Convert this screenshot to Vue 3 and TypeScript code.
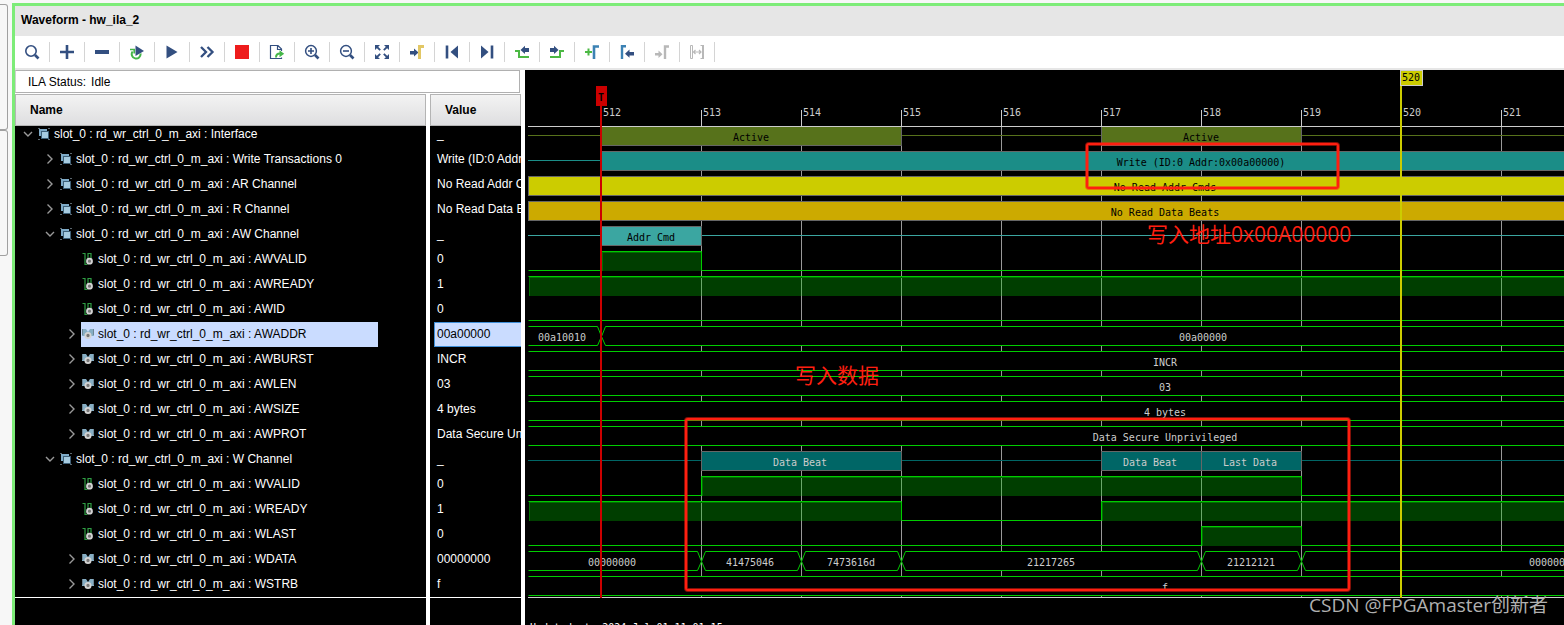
<script setup lang="ts">
type Kind = 'group' | 'signal' | 'bus'

interface Row {
  name: string
  value: string
  level: number
  kind: Kind
  open?: boolean
  selected?: boolean
}

interface Bar {
  from: number
  to: number
  label?: string
  center?: number
}

interface Segment {
  from: number
  to: number
  label: string
  center: number
}

type Wave =
  | { type: 'event'; color: string; text: string; bars: Bar[] }
  | { type: 'bit'; high: [number, number][] }
  | { type: 'value'; segments: Segment[] }

const prefix = 'slot_0 : rd_wr_ctrl_0_m_axi : '

const rows: Row[] = [
  { name: 'Interface', value: '_', level: 0, kind: 'group', open: true },
  { name: 'Write Transactions 0', value: 'Write (ID:0 Addr:0x00a00000)', level: 1, kind: 'group', open: false },
  { name: 'AR Channel', value: 'No Read Addr Cmds', level: 1, kind: 'group', open: false },
  { name: 'R Channel', value: 'No Read Data Beats', level: 1, kind: 'group', open: false },
  { name: 'AW Channel', value: '_', level: 1, kind: 'group', open: true },
  { name: 'AWVALID', value: '0', level: 2, kind: 'signal' },
  { name: 'AWREADY', value: '1', level: 2, kind: 'signal' },
  { name: 'AWID', value: '0', level: 2, kind: 'signal' },
  { name: 'AWADDR', value: '00a00000', level: 2, kind: 'bus', open: false, selected: true },
  { name: 'AWBURST', value: 'INCR', level: 2, kind: 'bus', open: false },
  { name: 'AWLEN', value: '03', level: 2, kind: 'bus', open: false },
  { name: 'AWSIZE', value: '4 bytes', level: 2, kind: 'bus', open: false },
  { name: 'AWPROT', value: 'Data Secure Unprivileged', level: 2, kind: 'bus', open: false },
  { name: 'W Channel', value: '_', level: 1, kind: 'group', open: true },
  { name: 'WVALID', value: '0', level: 2, kind: 'signal' },
  { name: 'WREADY', value: '1', level: 2, kind: 'signal' },
  { name: 'WLAST', value: '0', level: 2, kind: 'signal' },
  { name: 'WDATA', value: '00000000', level: 2, kind: 'bus', open: false },
  { name: 'WSTRB', value: 'f', level: 2, kind: 'bus', open: false },
]

const tools = [
  'Search', 'Add', 'Remove', 'Run trigger', 'Run', 'Run immediate', 'Stop', 'Export', 'Zoom in', 'Zoom out',
  'Zoom fit', 'Go to cursor', 'Go to start', 'Go to end', 'Previous transition', 'Next transition',
  'Add marker', 'Previous marker', 'Next marker', 'Swap cursors',
]

const CYCLE = 100
const ORIGIN = 76
const LEFT = 3
const FAR = 4000
const PITCH = 25
const TOP = 56
const BOTTOM = 527
const START = 511
const END = 560

function tx(cycle: number): number {
  if (cycle <= START) return LEFT
  if (cycle >= END) return FAR
  return ORIGIN + (cycle - 512) * CYCLE
}

const ticks = Array.from({ length: 20 }, (_, i) => 512 + i)

const whole = (label: string): Wave => ({
  type: 'value',
  segments: [{ from: START, to: END, label, center: 640 }],
})

const waves: Wave[] = [
  { type: 'event', color: '#57721b', text: '#000', bars: [{ from: 512, to: 515, label: 'Active', center: 226 }, { from: 517, to: 519, label: 'Active', center: 676 }] },
  { type: 'event', color: '#1b8d87', text: '#000', bars: [{ from: 512, to: END, label: 'Write (ID:0 Addr:0x00a00000)', center: 676 }] },
  { type: 'event', color: '#cccc00', text: '#000', bars: [{ from: START, to: END, label: 'No Read Addr Cmds', center: 640 }] },
  { type: 'event', color: '#ccaa00', text: '#000', bars: [{ from: START, to: END, label: 'No Read Data Beats', center: 640 }] },
  { type: 'event', color: '#3ba6a1', text: '#000', bars: [{ from: 512, to: 513, label: 'Addr Cmd', center: 126 }] },
  { type: 'bit', high: [[512, 513]] },
  { type: 'bit', high: [[START, END]] },
  { type: 'bit', high: [] },
  { type: 'value', segments: [{ from: START, to: 512, label: '00a10010', center: 37 }, { from: 512, to: END, label: '00a00000', center: 678 }] },
  whole('INCR'),
  whole('03'),
  whole('4 bytes'),
  whole('Data Secure Unprivileged'),
  {
    type: 'event', color: '#006666', text: '#ccc', bars: [
      { from: 513, to: 515, label: 'Data Beat', center: 275 },
      { from: 517, to: 518, label: 'Data Beat', center: 625 },
      { from: 518, to: 519, label: 'Last Data', center: 725 },
    ],
  },
  { type: 'bit', high: [[513, 519]] },
  { type: 'bit', high: [[START, 515], [517, END]] },
  { type: 'bit', high: [[518, 519]] },
  {
    type: 'value', segments: [
      { from: START, to: 513, label: '00000000', center: 87 },
      { from: 513, to: 514, label: '41475046', center: 225 },
      { from: 514, to: 515, label: '7473616d', center: 326 },
      { from: 515, to: 518, label: '21217265', center: 526 },
      { from: 518, to: 519, label: '21212121', center: 726 },
      { from: 519, to: END, label: '00000000', center: 1028 },
    ],
  },
  whole('f'),
]

const rowTop = (i: number): number => TOP + i * PITCH

function bitPath(high: [number, number][]): string {
  let d = high.length && high[0][0] <= START ? `M${LEFT} 0` : `M${LEFT} 19`
  for (const [from, to] of high) {
    if (from > START) d += `H${tx(from)}V0`
    d += `H${tx(to)}`
    if (to < END) d += 'V19'
  }
  return d + `H${FAR}`
}

function segmentPath(s: Segment): string {
  const a = tx(s.from)
  const b = tx(s.to)
  const left = s.from > START ? `M${a} 10L${a + 4} 0` : `M${a} 0`
  const right = s.to < END ? `H${b - 4}L${b} 10L${b - 4} 19` : `H${b}V19`
  const back = s.from > START ? `H${a + 4}L${a} 10` : `H${a}`
  return left + right + back
}
</script>

<template>
  <div class="screen">
    <aside class="edge">
      <div class="edge-card"></div>
      <div class="edge-card"></div>
    </aside>

    <main class="window">
      <h1 class="title">Waveform - hw_ila_2</h1>

      <div class="toolbar" role="toolbar" aria-label="Waveform tools">
        <button v-for="(tool, i) in tools" :key="tool" type="button" class="tool" :aria-label="tool" :disabled="i > 17">
          <svg width="16" height="16" viewBox="0 0 16 16" fill="none" stroke="#334f80" stroke-width="2">
            <template v-if="i === 0">
              <circle cx="7" cy="7" r="5.2" stroke-width="1.6" />
              <path d="M11 11L14.5 14.5" stroke-width="2.6" />
            </template>
            <path v-else-if="i === 1" d="M1 8H15M8 1V15" stroke-width="2.6" />
            <path v-else-if="i === 2" d="M1 8H15" stroke-width="4" />
            <template v-else-if="i === 3">
              <path d="M3.6 7.5A4.4 4.4 0 1 0 11.5 9.5" stroke="#45b649" />
              <path d="M1 5.5H5.2V9.5" stroke="#45b649" stroke-width="1.6" />
              <path d="M6.5 1.5L15 7L6.5 12Z" fill="#334f80" stroke="none" />
            </template>
            <path v-else-if="i === 4" d="M2.5 1.5L13.5 8L2.5 14.5Z" fill="#334f80" stroke="none" />
            <path v-else-if="i === 5" d="M2 3L7 8L2 13M8.5 3L13.5 8L8.5 13" stroke-width="2.3" />
            <rect v-else-if="i === 6" x="1" y="1" width="14" height="14" fill="#ee1c1c" stroke="none" />
            <template v-else-if="i === 7">
              <path d="M12.5 7V5L9 1.5H1.5V14.5H12.5V13.5M8.5 1.5V5.5H12.5" stroke-width="1.2" />
              <path d="M7 13.5C7 10.5 8.5 9.5 11 9.5" stroke="#45b649" stroke-width="2" />
              <path d="M10.5 6.2L15.2 9.7L10.5 13.2Z" fill="#45b649" stroke="none" />
            </template>
            <template v-else-if="i === 8 || i === 9">
              <circle cx="7" cy="7" r="5.4" stroke-width="1.5" />
              <path d="M11 11L14.5 14.5" stroke-width="2.6" />
              <path :d="i === 8 ? 'M4 7H10M7 4V10' : 'M4 7H10'" stroke-width="1.6" />
            </template>
            <template v-else-if="i === 10">
              <path d="M2 2L6.2 6.2M14 2L9.8 6.2M2 14L6.2 9.8M14 14L9.8 9.8" stroke-width="1.8" />
              <path d="M1 1H6L1 6ZM15 1H10L15 6ZM1 15H6L1 10ZM15 15H10L15 10Z" fill="#334f80" stroke="none" />
            </template>
            <template v-else-if="i === 11">
              <path d="M1 7H5V4.5L9.5 8.5L5 12.5V10.5H1Z" fill="#334f80" stroke="none" />
              <path d="M10.5 15V2.5H15" stroke="#e2c765" stroke-width="3" />
            </template>
            <template v-else-if="i === 12">
              <path d="M3 1.5V14.5" stroke-width="2.6" />
              <path d="M14 1.5L6.5 8L14 14.5Z" fill="#334f80" stroke="none" />
            </template>
            <template v-else-if="i === 13">
              <path d="M13 1.5V14.5" stroke-width="2.6" />
              <path d="M2 1.5L9.5 8L2 14.5Z" fill="#334f80" stroke="none" />
            </template>
            <template v-else-if="i === 14">
              <path d="M1 7H5V13H15" stroke="#4cb944" />
              <path d="M15 4H11V1.8L6.5 6L11 10V8H15Z" fill="#334f80" stroke="none" />
            </template>
            <template v-else-if="i === 15">
              <path d="M15 7H11V13H1" stroke="#4cb944" />
              <path d="M1 4H5V1.8L9.5 6L5 10V8H1Z" fill="#334f80" stroke="none" />
            </template>
            <template v-else-if="i === 16">
              <path d="M1 8H8M4.5 4.5V11.5" stroke="#4cb944" />
              <path d="M10 15V2.5H15" stroke="#3c82b4" stroke-width="2.6" />
            </template>
            <template v-else-if="i === 17">
              <path d="M3 15V2.2H7" stroke="#3c82b4" stroke-width="2.4" />
              <path d="M15 8H10.5V5.5L6 9.7L10.5 13.8V11.5H15Z" fill="#334f80" stroke="none" />
            </template>
            <template v-else-if="i === 18">
              <path d="M1 9H4.5V6.5L8.5 10.2L4.5 14V11.5H1Z" fill="#b8b8b8" stroke="none" />
              <path d="M11 15V2.5H15" stroke="#b8b8b8" stroke-width="2.4" />
            </template>
            <template v-else>
              <path d="M1.5 1.5H3.5V14.5H1.5ZM11.5 1.5H13M11.5 14.5H13" stroke="#b8b8b8" stroke-width="1" />
              <path d="M14 1V15" stroke="#b8b8b8" stroke-width="2" />
              <path d="M4.5 8H12M6.5 6L4.5 8L6.5 10M10 6L12 8L10 10" stroke="#b8b8b8" stroke-width="1.2" />
            </template>
          </svg>
        </button>
      </div>

      <div class="body">
        <section class="signals">
          <p class="status"><span>ILA Status:</span><span>Idle</span></p>
          <table class="tree">
            <colgroup>
              <col class="col-name" />
              <col class="col-value" />
            </colgroup>
            <thead>
              <tr>
                <th scope="col"><div class="head head-name">Name</div></th>
                <th scope="col"><div class="head">Value</div></th>
              </tr>
            </thead>
            <tbody>
              <tr v-for="row in rows" :key="row.name" :class="{ selected: row.selected }">
                <td>
                  <div class="cell" :style="{ paddingLeft: 6 + row.level * 22 + 'px' }">
                    <button v-if="row.open !== undefined" type="button" class="twist" :aria-label="row.name" :aria-expanded="row.open">
                      <svg width="12" height="12" viewBox="0 0 12 12" fill="none" stroke="#999" stroke-width="1.4">
                        <path :d="row.open ? 'M2 4L6 8L10 4' : 'M3.5 1.5L8 6L3.5 10.5'" />
                      </svg>
                    </button>
                    <span v-else class="twist"></span>
                    <span class="label">
                      <svg width="12" height="12" viewBox="0 0 12 12">
                        <template v-if="row.kind === 'group'">
                          <path d="M0 0H2V1H0ZM10 0H12V1H10ZM0 11H2V12H0ZM10 11H12V12H10Z" fill="#5c6870" />
                          <rect x="1" y="1" width="8" height="7" fill="#7fabc8" />
                          <rect x="3.5" y="3.5" width="7" height="7" fill="#a6cbe0" stroke="#3e6078" />
                        </template>
                        <template v-else-if="row.kind === 'signal'">
                          <path d="M.5 .5H3V11.5H5.5M6 11V.5H9V6" fill="none" stroke="#2f9e44" stroke-width="1.2" />
                          <circle cx="7.5" cy="8.2" r="2.5" fill="#777" stroke="#d4d4d4" stroke-width="1.8" />
                        </template>
                        <template v-else>
                          <path d="M0 1H4L6 4L8 1H12V8H0Z" fill="#86aec4" />
                          <path d="M0 1H1V7H0ZM11 1H12V7H11Z" fill="#6e8796" />
                          <circle cx="6" cy="7.5" r="2.6" fill="#777" stroke="#d4d4d4" stroke-width="1.9" />
                        </template>
                      </svg>
                      {{ prefix + row.name }}
                    </span>
                  </div>
                </td>
                <td>
                  <div class="value">{{ row.value }}</div>
                </td>
              </tr>
            </tbody>
          </table>
        </section>

        <section class="plot">
          <svg class="waves" width="100%" height="100%">
            <g shape-rendering="crispEdges">
              <rect v-for="t in ticks" :key="'g' + t" :x="tx(t)" :y="TOP" width="1" :height="BOTTOM - TOP" fill="#999" />
              <rect v-for="t in ticks" :key="'t' + t" :x="tx(t)" y="40" width="1" height="16" fill="#ccc" />
            </g>
            <text v-for="t in ticks" :key="'l' + t" :x="tx(t) + 2" y="46" fill="#ccc">{{ t }}</text>

            <g v-for="(w, i) in waves" :key="i" :transform="`translate(0 ${rowTop(i)})`">
              <template v-if="w.type === 'event'">
                <rect :x="LEFT" y="9" :width="FAR" height="1" :fill="w.color" />
                <template v-for="b in w.bars" :key="b.from">
                  <rect :x="tx(b.from) + 0.5" y="0.5" :width="tx(b.to) - tx(b.from)" height="19" :fill="w.color" stroke="#666" />
                  <text :x="b.center" y="15" text-anchor="middle" :fill="w.text">{{ b.label }}</text>
                </template>
              </template>
              <template v-else-if="w.type === 'bit'">
                <template v-for="h in w.high" :key="h[0]">
                  <rect :x="tx(h[0]) + 1" y="1" :width="tx(h[1]) - tx(h[0]) - 1" height="19" fill="#00cc00" fill-opacity=".3" />
                  <rect :x="tx(h[0]) + 1" y="1" :width="tx(h[1]) - tx(h[0]) - 1" height="1" fill="#007000" />
                  <rect :x="tx(h[0]) + 1" y="1" width="1" height="19" fill="#007000" />
                </template>
                <path class="trace" :d="bitPath(w.high)" />
              </template>
              <template v-else>
                <template v-for="s in w.segments" :key="s.from">
                  <path class="trace filled" :d="segmentPath(s)" />
                  <text :x="s.center" y="15" text-anchor="middle" fill="#ccc">{{ s.label }}</text>
                </template>
              </template>
            </g>

            <g shape-rendering="crispEdges">
              <rect x="0" y="56" width="3" :height="BOTTOM - TOP" fill="#000" />
              <rect x="3" y="56" :width="FAR" height="1" fill="#ccc" />
              <rect x="3" :y="BOTTOM" :width="FAR" height="1" fill="#ccc" />
              <rect x="75" y="16" width="2" height="512" fill="#c00" />
              <rect x="71" y="16" width="11" height="20" fill="#c00" />
              <rect x="875" y="0" width="2" height="528" fill="#cc0" />
              <rect x="875" y="0" width="23" height="16" fill="#ccc" />
              <rect x="876" y="1" width="21" height="14" fill="#cc0" />
            </g>
            <text class="trigger" x="76" y="31" text-anchor="middle">T</text>
            <text x="877" y="11" fill="#000">520</text>
            <text x="5" y="561" fill="#fff">Updated at: 2024-Jul-01 11:01:15</text>

            <g fill="none" stroke="#ff1f10">
              <rect x="562" y="74" width="251" height="44" rx="2" stroke-width="4" stroke-opacity=".5" />
              <rect x="562" y="74" width="251" height="44" rx="2" stroke-width="2" />
              <rect x="161" y="349" width="663" height="171" rx="2" stroke-width="4" stroke-opacity=".5" />
              <rect x="161" y="349" width="663" height="171" rx="2" stroke-width="2" />
            </g>
            <text class="note" x="622" y="172">写入地址0x00A00000</text>
            <text class="note" x="270" y="313">写入数据</text>
          </svg>
          <p class="watermark">CSDN @FPGAmaster创新者</p>
        </section>
      </div>
    </main>
  </div>
</template>

<style>
body {
  margin: 0;
  overflow: hidden;
}
</style>

<style scoped>
.screen {
  display: flex;
  height: 100vh;
  overflow: hidden;
  background: #f7f7f7;
  font: 12px "Liberation Sans", Arial, sans-serif;
  color: #000;
}

.edge {
  flex: none;
  width: 12px;
  padding-top: 4px;
}

.edge-card {
  box-sizing: border-box;
  width: 8px;
  height: 126px;
  border: 1px solid #a0a0a0;
  border-left: 0;
  border-radius: 0 3px 3px 0;
}

.window {
  flex: 1;
  min-width: 0;
  display: flex;
  flex-direction: column;
  margin-top: 3px;
  border: solid #7dec78;
  border-width: 3px 0 0 3px;
  background: #fff;
}

.title {
  margin: 0;
  padding: 0 0 2px 6px;
  background: #e6e6e6;
  font-size: 12px;
  line-height: 28px;
}

.toolbar {
  display: flex;
  align-items: center;
  height: 32px;
  border-bottom: 2px solid #e6e6e6;
}

.tool {
  display: flex;
  align-items: center;
  justify-content: center;
  width: 35px;
  height: 20px;
  padding: 0;
  border: 0;
  border-right: 1px solid #d4d4d4;
  background: none;
}

.body {
  flex: 1;
  min-height: 0;
  display: flex;
}

.signals {
  flex: none;
  box-sizing: border-box;
  width: 510px;
  overflow: hidden;
  border-right: 4px solid #fff;
  background: linear-gradient(90deg, #000 411px, #fff 411px, #fff 415px, #000 415px);
}

.status {
  display: flex;
  gap: 5px;
  box-sizing: border-box;
  height: 23px;
  margin: 0 1px 0 0;
  padding-left: 12px;
  border: 1px solid #b0b0b0;
  border-left-color: #d0d0d0;
  background: #fff;
  line-height: 22px;
  box-shadow: 0 1px #fff, 1px 0 #fff, 1px 1px #fff;
}

.tree {
  width: 506px;
  margin-top: 1px;
  table-layout: fixed;
  border-collapse: separate;
  border-spacing: 0;
  border-bottom: 1px solid #fff;
  color: #fff;
}

.col-name {
  width: 415px;
}

.col-value {
  width: 91px;
}

th,
td {
  padding: 0;
  text-align: left;
}

th {
  background: #fff;
}

.head {
  box-sizing: border-box;
  height: 32px;
  padding-left: 14px;
  border: 1px solid #b4b4b4;
  background: linear-gradient(#f3f3f3, #dedee0);
  color: #000;
  line-height: 30px;
}

.head-name {
  margin-right: 4px;
}

.cell,
.value {
  display: flex;
  align-items: center;
  height: 25px;
  overflow: hidden;
  white-space: nowrap;
}

tbody tr:first-child .cell,
tbody tr:first-child .value {
  margin-top: -4px;
}

.twist,
.label {
  display: flex;
  align-items: center;
  box-sizing: border-box;
  height: 25px;
}

.twist {
  flex: none;
  width: 16px;
  padding: 0 0 1px 1px;
  border: 0;
  background: none;
}

.label {
  gap: 4px;
  padding: 0 0 2px 1px;
}

.value {
  box-sizing: border-box;
  padding: 0 0 2px 7px;
}

.selected .label {
  width: 297px;
  background: #cadcff;
  color: #000;
}

.selected .value {
  margin-left: 4px;
  padding-left: 2px;
  border: 1px solid #3f8fd8;
  border-right: 0;
  background: #cadcff;
  color: #000;
}

.plot {
  position: relative;
  flex: 1;
  min-width: 0;
  background: #000;
  overflow: hidden;
}

.waves {
  display: block;
  font: 10px "DejaVu Sans Mono", monospace;
}

.trace {
  fill: none;
  stroke: #00cc00;
  stroke-width: 1;
  transform: translate(0.5px, 0.5px);
}

.filled {
  fill: #000;
}

.trigger {
  fill: #000;
  font-weight: bold;
}

.note {
  fill: #ff1f10;
  font: 21px "Open Sans", "Noto Sans CJK SC", sans-serif;
}

.watermark {
  position: absolute;
  right: 16px;
  bottom: 6px;
  margin: 0;
  color: #b0b0b0;
  font: 19px/28px "Open Sans", "Noto Sans CJK SC", sans-serif;
  white-space: nowrap;
}
</style>
